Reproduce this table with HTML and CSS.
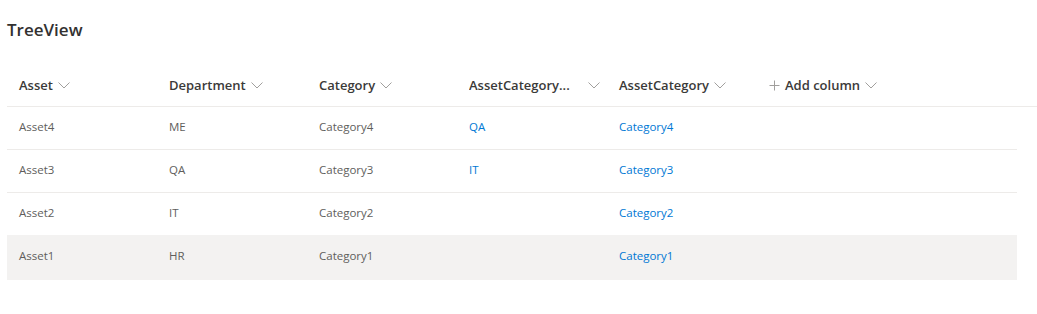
FILE: index.html
```html
<!DOCTYPE html>
<html lang="en">
<head>
<meta charset="utf-8">
<title>TreeView</title>
<link rel="stylesheet" href="styles.css">
</head>
<body>
<div class="page">
  <h1 class="title">TreeView</h1>
  <div class="list">
    <div class="header">
      <div class="hcell"><span class="htext">Asset</span><svg class="chev" viewBox="0 0 12 7"><path d="M0.5 0.5 L6 6 L11.5 0.5"/></svg></div>
      <div class="hcell"><span class="htext">Department</span><svg class="chev" viewBox="0 0 12 7"><path d="M0.5 0.5 L6 6 L11.5 0.5"/></svg></div>
      <div class="hcell"><span class="htext">Category</span><svg class="chev" viewBox="0 0 12 7"><path d="M0.5 0.5 L6 6 L11.5 0.5"/></svg></div>
      <div class="hcell hcell-trunc"><span class="htext trunc">AssetCategory...</span><svg class="chev chev-end" viewBox="0 0 12 7"><path d="M0.5 0.5 L6 6 L11.5 0.5"/></svg></div>
      <div class="hcell"><span class="htext">AssetCategory</span><svg class="chev" viewBox="0 0 12 7"><path d="M0.5 0.5 L6 6 L11.5 0.5"/></svg></div>
      <div class="hcell hcell-add"><svg class="plus" viewBox="0 0 11 11"><path d="M5.5 0.5 V10.5 M0.5 5.5 H10.5"/></svg><span class="htext">Add column</span><svg class="chev" viewBox="0 0 12 7"><path d="M0.5 0.5 L6 6 L11.5 0.5"/></svg></div>
    </div>
    <div class="row">
      <div class="cell">Asset4</div>
      <div class="cell">ME</div>
      <div class="cell">Category4</div>
      <div class="cell link">QA</div>
      <div class="cell link">Category4</div>
    </div>
    <div class="row">
      <div class="cell">Asset3</div>
      <div class="cell">QA</div>
      <div class="cell">Category3</div>
      <div class="cell link">IT</div>
      <div class="cell link">Category3</div>
    </div>
    <div class="row">
      <div class="cell">Asset2</div>
      <div class="cell">IT</div>
      <div class="cell">Category2</div>
      <div class="cell link"></div>
      <div class="cell link">Category2</div>
    </div>
    <div class="row row-selected">
      <div class="cell">Asset1</div>
      <div class="cell">HR</div>
      <div class="cell">Category1</div>
      <div class="cell link"></div>
      <div class="cell link">Category1</div>
    </div>
  </div>
</div>
</body>
</html>
```

FILE: styles.css
```css
html, body {
  margin: 0;
  padding: 0;
  background: #ffffff;
}

body {
  font-family: "Segoe UI", "Open Sans", "Noto Sans", sans-serif;
  color: #323130;
  -webkit-font-smoothing: antialiased;
}

.page {
  padding-left: 7px;
}

.title {
  margin: 18px 0 22px 0;
  font-size: 17px;
  line-height: 24px;
  font-weight: 600;
  color: #323130;
}

.list {
  display: flex;
  flex-direction: column;
}

.header {
  display: flex;
  height: 42px;
  border-bottom: 1px solid #edebe9;
  width: 1030px;
}

.hcell {
  width: 150px;
  box-sizing: border-box;
  padding-left: 12px;
  display: flex;
  align-items: center;
  font-size: 13px;
  font-weight: 600;
  color: #3b3a39;
  white-space: nowrap;
}

.hcell-trunc {
  padding-right: 7px;
}

.htext {
  line-height: 20px;
}

.trunc {
  overflow: hidden;
  text-overflow: ellipsis;
}

.chev {
  width: 12px;
  height: 7px;
  margin-left: 5px;
  margin-top: 1px;
  flex: none;
}

.chev path, .plus path {
  fill: none;
  stroke: #a19f9d;
  stroke-width: 1;
}

.chev-end {
  margin-left: auto;
}

.plus {
  width: 11px;
  height: 11px;
  margin-right: 5px;
  flex: none;
}

.hcell-add {
  width: 160px;
}

.row {
  display: flex;
  height: 42px;
  width: 1010px;
  border-bottom: 1px solid #edebe9;
}

.row-selected {
  background: #f3f2f1;
  border-bottom-color: #f3f2f1;
  margin-top: -1px;
  height: 44px;
}

.row-selected .cell {
  padding-bottom: 4px;
}

.cell {
  width: 150px;
  box-sizing: border-box;
  padding-left: 12px;
  padding-bottom: 3px;
  display: flex;
  align-items: center;
  font-size: 11.5px;
  color: #605e5c;
  white-space: nowrap;
}

.link {
  color: #0078d4;
}
```
